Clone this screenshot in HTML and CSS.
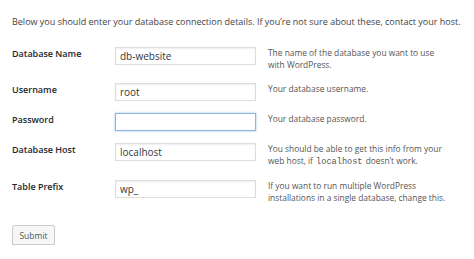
FILE: index.html
```html
<!DOCTYPE html>
<html lang="en">
<head>
  <meta charset="UTF-8" />
  <title>WordPress &rsaquo; Setup Configuration File</title>
  <link rel="stylesheet" href="styles.css">
</head>
<body>
  <form class="setup" method="post" action="#">
    <p class="intro">Below you should enter your database connection details. If you&#8217;re not sure about these, contact your host.</p>
    <table class="form-table">
      <tr>
        <th scope="row"><label for="dbname">Database Name</label></th>
        <td class="field"><input name="dbname" id="dbname" type="text" value="db-website"></td>
        <td class="desc">The name of the database you want to use with WordPress.</td>
      </tr>
      <tr>
        <th scope="row"><label for="uname">Username</label></th>
        <td class="field"><input name="uname" id="uname" type="text" value="root"></td>
        <td class="desc">Your database username.</td>
      </tr>
      <tr>
        <th scope="row"><label for="pwd">Password</label></th>
        <td class="field"><input name="pwd" id="pwd" type="text" value="" class="focused"></td>
        <td class="desc">Your database password.</td>
      </tr>
      <tr>
        <th scope="row"><label for="dbhost">Database Host</label></th>
        <td class="field"><input name="dbhost" id="dbhost" type="text" value="localhost"></td>
        <td class="desc">You should be able to get this info from your web host, if <code>localhost</code> doesn&#8217;t work.</td>
      </tr>
      <tr>
        <th scope="row"><label for="prefix">Table Prefix</label></th>
        <td class="field"><input name="prefix" id="prefix" type="text" value="wp_"></td>
        <td class="desc">If you want to run multiple WordPress installations in a single database, change this.</td>
      </tr>
    </table>
    <p class="step"><input name="submit" type="submit" value="Submit" class="button"></p>
  </form>
</body>
</html>
```

FILE: styles.css
```css
/* Page */
html, body {
  margin: 0;
  padding: 0;
  background: #fff;
}

body {
  font-family: "Open Sans", "Noto Sans", sans-serif;
  font-size: 9px;
  line-height: 12px;
  color: #444;
}

.setup {
  padding: 16px 12px 0 12px;
}

.intro {
  margin: 0 0 19px 0;
}

/* Form rows */
.form-table {
  border-collapse: collapse;
}

.form-table th,
.form-table td {
  padding: 0;
  vertical-align: top;
}

.form-table tr + tr th,
.form-table tr + tr td {
  padding-top: 12px;
}

.form-table th {
  width: 103px;
  text-align: left;
  font-weight: 600;
  color: #23282d;
}

.form-table label {
  display: block;
  padding-top: 1px;
}

.field input {
  box-sizing: border-box;
  display: block;
  width: 141px;
  height: 18px;
  margin: 0;
  padding: 0 4px;
  border: 1px solid #ddd;
  box-shadow: inset 0 1px 2px rgba(0, 0, 0, 0.07);
  font-family: "Open Sans", "Noto Sans", sans-serif;
  font-size: 10px;
  color: #32373c;
  background: #fff;
  outline: none;
}

.field input.focused {
  border-color: #8fb2e4;
  box-shadow: 0 0 2px rgba(30, 140, 190, 0.5);
}

.form-table .desc {
  padding-left: 12px;
  width: 182px;
  font-size: 8.4px;
  color: #555;
}

.desc code {
  display: inline-block;
  margin: 0 1px;
  font-family: "Liberation Mono", "DejaVu Sans Mono", monospace;
  font-size: 8.6px;
  line-height: 12px;
}

/* Submit */
.step {
  margin: 21px 0 0 0;
}

.button {
  box-sizing: border-box;
  display: block;
  width: 43px;
  height: 20px;
  padding: 0;
  border: 1px solid #ccc;
  border-radius: 2px;
  background: #f7f7f7;
  box-shadow: 0 1px 0 #ccc;
  font-family: "Open Sans", "Noto Sans", sans-serif;
  font-size: 8.5px;
  color: #555;
}
```
